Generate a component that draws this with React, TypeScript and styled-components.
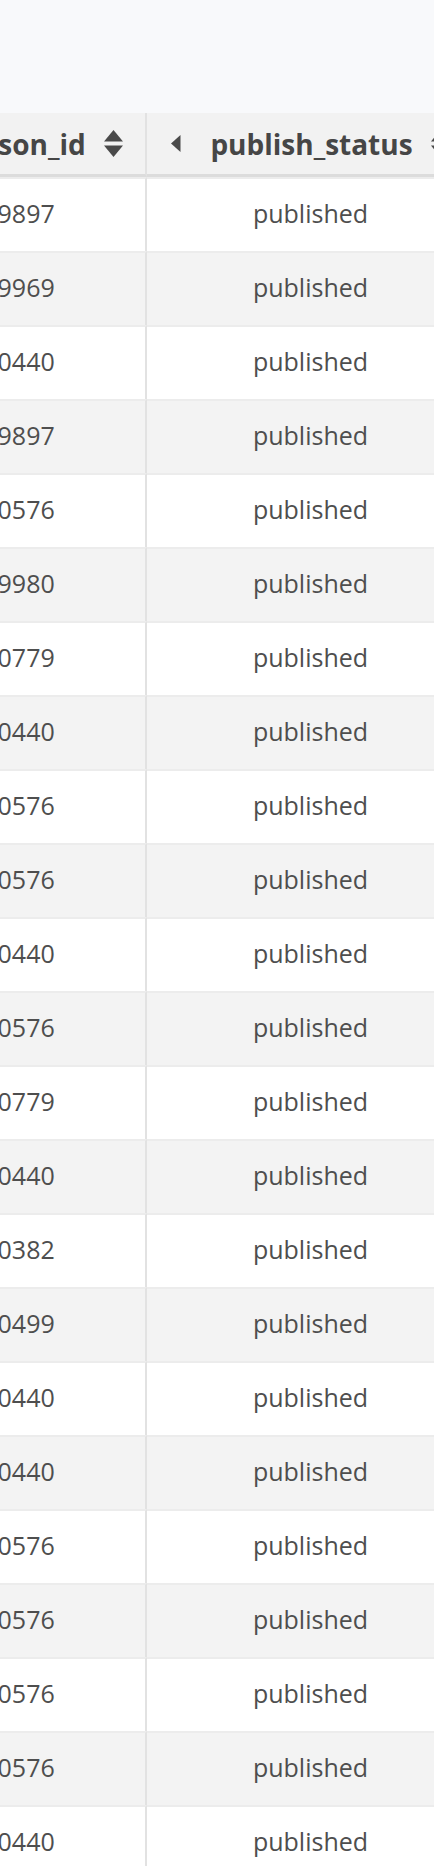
import React from "react";
import styled, { createGlobalStyle } from "styled-components";

const GlobalStyle = createGlobalStyle`
  html, body { margin: 0; padding: 0; background: #ffffff; }
  body { font-family: "Open Sans", "Noto Sans", Arial, sans-serif; }
  * { box-sizing: border-box; }
`;

const Page = styled.div`
  width: 434px;
  display: flex;
  flex-direction: column;
  overflow: hidden;
`;

const TopBar = styled.div`
  height: 113px;
  background: #f8f9fb;
`;

const Viewport = styled.div`
  width: 434px;
  overflow: hidden;
`;

const Table = styled.div`
  display: grid;
  grid-template-columns: 254px 327px;
  margin-left: -107px;
  width: 581px;
`;

const HeadCell = styled.div<{ $first?: boolean }>`
  height: 64px;
  background: #f2f2f2;
  border-bottom: 3px solid #dcdcdc;
  border-right: ${(p) => (p.$first ? "2px solid #e2e2e2" : "none")};
  display: flex;
  align-items: center;
  justify-content: center;
  padding-right: ${(p) => (p.$first ? "3px" : "0")};
  color: #464646;
  font-weight: 700;
  font-size: 28px;
  white-space: nowrap;
`;

const HeadLabel = styled.span`
  margin: 0 18px 0 29px;
  line-height: 1;
`;

const Cell = styled.div<{ $odd: boolean; $first?: boolean }>`
  height: 74px;
  border-top: 2px solid #ececec;
  border-right: ${(p) => (p.$first ? "2px solid #e2e2e2" : "none")};
  background: ${(p) => (p.$odd ? "#f3f3f3" : "#ffffff")};
  display: flex;
  align-items: center;
  justify-content: center;
  padding-bottom: 4px;
  color: #4e4e4e;
  font-size: 25px;
  font-weight: 400;
  white-space: nowrap;
`;

const MoveArrow = () => (
  <svg width="10" height="17" viewBox="0 0 10 17" aria-hidden>
    <polygon points="9.5,0 0,8.5 9.5,17" fill="#4a4a4a" />
  </svg>
);

const SortIcon = () => (
  <svg width="19" height="27" viewBox="0 0 19 27" aria-hidden>
    <polygon points="0,11.5 9.5,0 19,11.5" fill="#4a4a4a" />
    <polygon points="0,15.5 19,15.5 9.5,27" fill="#4a4a4a" />
  </svg>
);

const ids = [
  "19897", "19969", "20440", "19897", "20576", "19980", "20779", "20440",
  "20576", "20576", "20440", "20576", "20779", "20440", "20382", "20499",
  "20440", "20440", "20576", "20576", "20576", "20576", "20440",
];

export default function App() {
  return (
    <Page>
      <GlobalStyle />
      <TopBar />
      <Viewport>
        <Table>
          <HeadCell $first>
            <MoveArrow />
            <HeadLabel>person_id</HeadLabel>
            <SortIcon />
          </HeadCell>
          <HeadCell>
            <MoveArrow />
            <HeadLabel>publish_status</HeadLabel>
            <SortIcon />
          </HeadCell>
          {ids.map((id, i) => (
            <React.Fragment key={i}>
              <Cell $odd={i % 2 === 1} $first>
                {id}
              </Cell>
              <Cell $odd={i % 2 === 1}>published</Cell>
            </React.Fragment>
          ))}
        </Table>
      </Viewport>
    </Page>
  );
}
